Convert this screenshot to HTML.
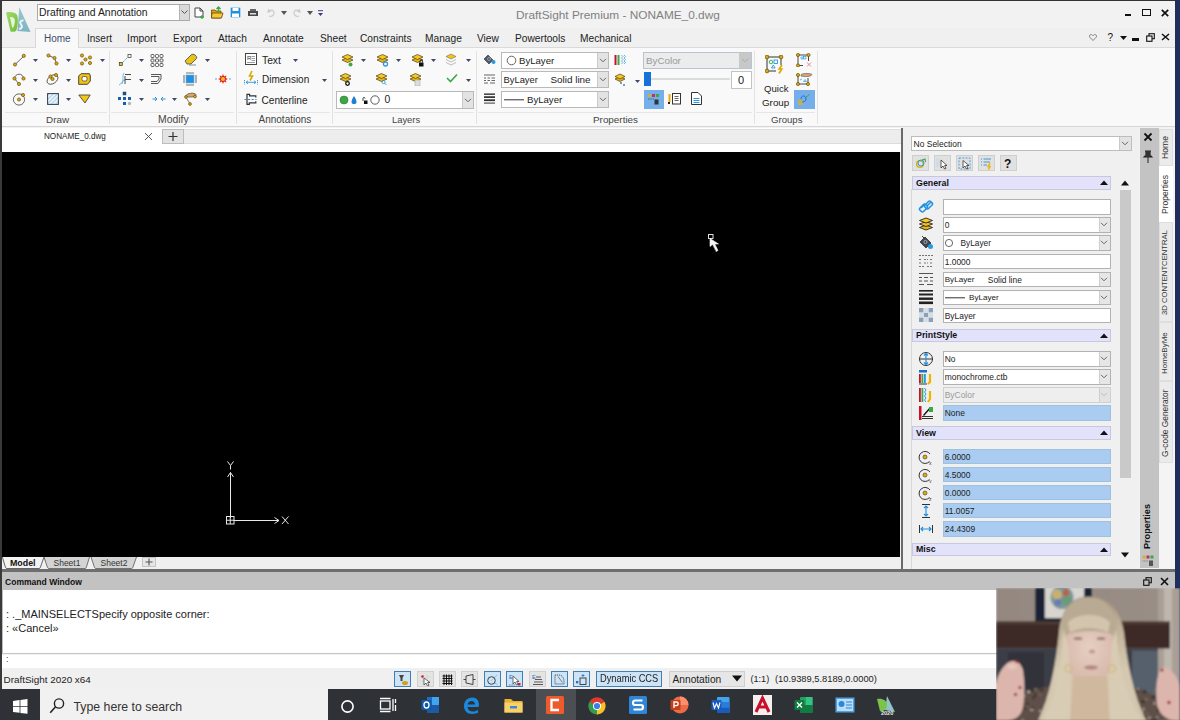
<!DOCTYPE html>
<html><head><meta charset="utf-8">
<style>
*{margin:0;padding:0;box-sizing:border-box}
html,body{width:1180px;height:720px;overflow:hidden;background:#f0f0f0;font-family:"Liberation Sans",sans-serif;font-size:12px;color:#222}
.a{position:absolute}
.t{position:absolute;white-space:nowrap;line-height:1}
</style></head><body>
<!-- window frame -->
<div class="a" style="left:0;top:0;width:1180px;height:720px;background:#f2f2f2"></div>
<div class="a" style="left:0;top:0;width:1180px;height:1px;background:#333"></div>
<div class="a" style="left:0;top:0;width:2px;height:690px;background:#3a3a3a"></div>
<div class="a" style="left:1175px;top:0;width:5px;height:720px;background:#1f2d5c"></div>

<!-- title bar -->
<div id="title" class="a" style="left:2px;top:1px;width:1173px;height:27px;background:#f2f2f2"></div>
<!-- tabs row -->
<div id="tabs" class="a" style="left:2px;top:28px;width:1173px;height:19px;background:#f0f0f0"></div>
<!-- ribbon -->
<div id="ribbon" class="a" style="left:2px;top:47px;width:1173px;height:80px;background:#f9f9f9;border-top:1px solid #dadada;border-bottom:1px solid #d6d6d6"></div>


<!-- TITLE BAR CONTENT -->
<svg class="a" style="left:0px;top:0px" width="36" height="36" viewBox="0 0 36 36">
  <defs><linearGradient id="lgD" x1="0" y1="0" x2="1" y2="1"><stop offset="0" stop-color="#a6d86a"/><stop offset="1" stop-color="#6fbf3a"/></linearGradient>
  <linearGradient id="lgT" x1="0" y1="0" x2="0" y2="1"><stop offset="0" stop-color="#9ccbc9"/><stop offset="1" stop-color="#7fb3c4"/></linearGradient></defs>
  <polygon points="19.3,7 30.5,32 17.5,31" fill="url(#lgT)"/>
  <path d="M6,12.5 C10,11.5 15,12 17,15 C18.5,18 18,27 16,31 C14,32 12,32 10.5,31.5 Z" fill="url(#lgD)"/>
  <path d="M10,17 C12.5,16.5 14.5,17.5 14.8,20 C15,23 14,26.5 13,28 C12.5,28 12.2,27.5 12,27 Z" fill="#e6f4da"/>
  <path d="M23.5,20.5 C20.5,20 19.5,22.5 21,24.5 C22.5,26 22.5,28.5 19,29" stroke="#eaf4f4" stroke-width="2" fill="none"/>
</svg>
<div class="a" style="left:37px;top:4px;width:153px;height:17px;background:#fff;border:1px solid #a9a9a9"></div>
<div class="a" style="left:179px;top:5px;width:10px;height:15px;background:#dadada;border-left:1px solid #b5b5b5"></div>
<svg class="a" style="left:180px;top:9px" width="9" height="6"><path d="M1.5,1.5 L4.5,4.5 L7.5,1.5" stroke="#555" fill="none" stroke-width="1"/></svg>
<div class="t" style="left:39px;top:8px;font-size:10.4px;color:#1a1a1a">Drafting and Annotation</div>
<!-- quick access -->
<svg class="a" style="left:194px;top:7px" width="11" height="12" viewBox="0 0 11 12"><path d="M1,1 H6 L9,4 V10 H1 Z M6,1 V4 H9" stroke="#444" fill="#fff" stroke-width="1"/><path d="M8,8 V12 M6,10 H10" stroke="#3aa845" stroke-width="1.3"/></svg>
<svg class="a" style="left:211px;top:6px" width="13" height="13" viewBox="0 0 13 13"><path d="M0.5,4 H4 L5,5 H10 V12 H0.5 Z" fill="#d9a514" stroke="#6a4a00" stroke-width="0.8"/><path d="M1,7 H12 L10.5,12 H0.5 Z" fill="#f3c93a" stroke="#6a4a00" stroke-width="0.8"/><path d="M7.5,1 V6 M5.5,3 L7.5,1 L9.5,3" stroke="#3aa845" stroke-width="1.3" fill="none"/></svg>
<svg class="a" style="left:230px;top:7px" width="11" height="11" viewBox="0 0 11 11"><rect x="0.7" y="0.7" width="9.6" height="9.6" fill="#1f8fe0"/><rect x="2.5" y="1" width="6" height="3" fill="#fff"/><rect x="2" y="6.5" width="7" height="3.5" fill="#fff"/></svg>
<svg class="a" style="left:247px;top:8px" width="12" height="9" viewBox="0 0 12 9"><path d="M3,1 H9 V3 H3 Z" fill="#666"/><path d="M1,3 H11 V8 H1 Z" fill="#4a4a4a"/><rect x="3" y="5" width="6" height="1.5" fill="#ddd"/></svg>
<svg class="a" style="left:267px;top:7px" width="8" height="11" viewBox="0 0 8 11"><path d="M2,2 L1,5 L4,4 M1.5,4.5 C4,2 7,3 7,6 C7,9 4,10 2,9" stroke="#c9c9c9" fill="none" stroke-width="1.2"/></svg>
<svg class="a" style="left:281px;top:11px" width="6" height="4"><polygon points="0,0 6,0 3,4" fill="#555"/></svg>
<svg class="a" style="left:293px;top:7px" width="8" height="11" viewBox="0 0 8 11"><path d="M6,2 L7,5 L4,4 M6.5,4.5 C4,2 1,3 1,6 C1,9 4,10 6,9" stroke="#c9c9c9" fill="none" stroke-width="1.2"/></svg>
<svg class="a" style="left:307px;top:11px" width="6" height="4"><polygon points="0,0 6,0 3,4" fill="#555"/></svg>
<svg class="a" style="left:318px;top:10px" width="5" height="7"><rect x="0" y="0" width="5" height="1.2" fill="#5a5a9a"/><polygon points="0,3 5,3 2.5,6" fill="#3a3a7a"/></svg>
<div class="t" style="left:516px;top:10px;font-size:11.84px;color:#808080">DraftSight Premium - NONAME_0.dwg</div>
<!-- window controls -->
<div class="a" style="left:1124.5px;top:13.5px;width:6px;height:2px;background:#111"></div>
<div class="a" style="left:1142px;top:8.5px;width:8.5px;height:7.5px;border:1.3px solid #111;border-top-width:1.8px"></div>
<svg class="a" style="left:1161px;top:8.5px" width="8" height="8"><path d="M0.8,0.8 L7.2,7.2 M7.2,0.8 L0.8,7.2" stroke="#111" stroke-width="1.7"/></svg>
<!-- tab row right controls -->
<svg class="a" style="left:1089px;top:34px" width="8" height="7" viewBox="0 0 8 7"><path d="M4,6.5 L0.8,3.2 C-0.2,1.8 1,0.3 2.3,0.6 C3.2,0.8 4,1.8 4,1.8 C4,1.8 4.8,0.8 5.7,0.6 C7,0.3 8.2,1.8 7.2,3.2 Z" fill="none" stroke="#777" stroke-width="0.9"/></svg>
<div class="t" style="left:1107.5px;top:33px;font-size:10px;color:#111">?</div>
<svg class="a" style="left:1120px;top:36px" width="7" height="4"><polygon points="0,0 7,0 3.5,4" fill="#111"/></svg>
<div class="a" style="left:1132px;top:38px;width:7px;height:2.5px;background:#111"></div>
<svg class="a" style="left:1146px;top:33px" width="9" height="9" viewBox="0 0 9 9"><rect x="3" y="0.7" width="5.3" height="5" fill="none" stroke="#111" stroke-width="1.1"/><rect x="0.7" y="3" width="5.3" height="5.3" fill="#f0f0f0" stroke="#111" stroke-width="1.1"/></svg>
<svg class="a" style="left:1161px;top:33px" width="9" height="8"><path d="M1,1 L8,7 M8,1 L1,7" stroke="#111" stroke-width="1.5"/></svg>
<!-- menu tabs -->
<div class="a" style="left:35px;top:28px;width:44px;height:20px;background:#f9f9f9;border:1px solid #d8d8d8;border-bottom:none"></div>
<div class="t" style="left:44px;top:34px;font-size:10px;color:#3e4c6e">Home</div>
<div class="t" style="left:87px;top:34px;font-size:10px;color:#222">Insert</div>
<div class="t" style="left:127px;top:34px;font-size:10.4px;color:#222">Import</div>
<div class="t" style="left:173px;top:34px;font-size:10px;color:#222">Export</div>
<div class="t" style="left:218px;top:34px;font-size:10.2px;color:#222">Attach</div>
<div class="t" style="left:263px;top:34px;font-size:10.2px;color:#222">Annotate</div>
<div class="t" style="left:320px;top:34px;font-size:10.2px;color:#222">Sheet</div>
<div class="t" style="left:360px;top:34px;font-size:10.2px;color:#222">Constraints</div>
<div class="t" style="left:425px;top:34px;font-size:10.2px;color:#222">Manage</div>
<div class="t" style="left:477px;top:34px;font-size:10.2px;color:#222">View</div>
<div class="t" style="left:515px;top:34px;font-size:10.2px;color:#222">Powertools</div>
<div class="t" style="left:580px;top:34px;font-size:10.2px;color:#222">Mechanical</div>

<!-- RIBBON START -->
<div class="a" style="left:109px;top:51px;width:1px;height:73px;background:#e2e2e2"></div>
<div class="a" style="left:236px;top:51px;width:1px;height:73px;background:#e2e2e2"></div>
<div class="a" style="left:332px;top:51px;width:1px;height:73px;background:#e2e2e2"></div>
<div class="a" style="left:476px;top:51px;width:1px;height:73px;background:#e2e2e2"></div>
<div class="a" style="left:754px;top:51px;width:1px;height:73px;background:#e2e2e2"></div>
<div class="a" style="left:817px;top:51px;width:1px;height:73px;background:#e2e2e2"></div>
<div class="a" style="left:5px;top:112px;width:102px;height:1px;background:#e6e6e6"></div>
<div class="a" style="left:111px;top:112px;width:123px;height:1px;background:#e6e6e6"></div>
<div class="a" style="left:238px;top:112px;width:92px;height:1px;background:#e6e6e6"></div>
<div class="a" style="left:334px;top:112px;width:140px;height:1px;background:#e6e6e6"></div>
<div class="a" style="left:478px;top:112px;width:274px;height:1px;background:#e6e6e6"></div>
<div class="a" style="left:756px;top:112px;width:59px;height:1px;background:#e6e6e6"></div>
<div class="t" style="left:46px;top:114.5px;font-size:9.9px;color:#444;">Draw</div>
<div class="t" style="left:158px;top:114.5px;font-size:10.4px;color:#444;">Modify</div>
<div class="t" style="left:258.5px;top:114.5px;font-size:10px;color:#444;">Annotations</div>
<div class="t" style="left:392px;top:114.5px;font-size:9.4px;color:#444;">Layers</div>
<div class="t" style="left:593px;top:114.5px;font-size:9.9px;color:#444;">Properties</div>
<div class="t" style="left:771px;top:114.5px;font-size:9.6px;color:#444;">Groups</div>
<svg class="a" style="left:12px;top:53px" width="14" height="14" viewBox="0 0 14 14"><line x1="3" y1="11.5" x2="12" y2="3" stroke="#555" stroke-width="0.9"/><circle cx="3" cy="11.5" r="1.6" fill="#d9a818" stroke="#6b5200" stroke-width="0.7"/><circle cx="11.8" cy="2.8" r="1.6" fill="#d9a818" stroke="#6b5200" stroke-width="0.7"/></svg>
<svg class="a" style="left:32.5px;top:59.0px" width="5" height="3" viewBox="0 0 5 3"><polygon points="0,0 5,0 2.5,3" fill="#3b4a6b"/></svg>
<svg class="a" style="left:46px;top:53px" width="14" height="14" viewBox="0 0 14 14"><path d="M2.5,2.5 L8.5,5 L10.5,10.5" stroke="#555" fill="none" stroke-width="0.9"/><circle cx="2.5" cy="2.5" r="1.6" fill="#d9a818" stroke="#6b5200" stroke-width="0.7"/><circle cx="8.5" cy="5" r="1.6" fill="#d9a818" stroke="#6b5200" stroke-width="0.7"/><circle cx="10.5" cy="10.5" r="1.6" fill="#d9a818" stroke="#6b5200" stroke-width="0.7"/></svg>
<svg class="a" style="left:66.0px;top:59.0px" width="5" height="3" viewBox="0 0 5 3"><polygon points="0,0 5,0 2.5,3" fill="#3b4a6b"/></svg>
<svg class="a" style="left:79px;top:53px" width="14" height="14" viewBox="0 0 14 14"><circle cx="3" cy="2.5" r="1.6" fill="#d9a818" stroke="#6b5200" stroke-width="0.7"/><circle cx="6.5" cy="6.5" r="1.6" fill="#d9a818" stroke="#6b5200" stroke-width="0.7"/><circle cx="3" cy="10.5" r="1.6" fill="#d9a818" stroke="#6b5200" stroke-width="0.7"/><circle cx="11" cy="4.5" r="1.6" fill="#d9a818" stroke="#6b5200" stroke-width="0.7"/><circle cx="11" cy="10" r="1.6" fill="#d9a818" stroke="#6b5200" stroke-width="0.7"/></svg>
<svg class="a" style="left:99.5px;top:59.0px" width="5" height="3" viewBox="0 0 5 3"><polygon points="0,0 5,0 2.5,3" fill="#3b4a6b"/></svg>
<svg class="a" style="left:12px;top:72px" width="14" height="14" viewBox="0 0 14 14"><path d="M2.5,6.5 C3,1 11,0.5 11.5,6.5 M2.5,6.5 L7,12" stroke="#555" fill="none" stroke-width="0.9"/><circle cx="2.5" cy="6.5" r="1.6" fill="#d9a818" stroke="#6b5200" stroke-width="0.7"/><circle cx="11.5" cy="6.5" r="1.6" fill="#d9a818" stroke="#6b5200" stroke-width="0.7"/><circle cx="7" cy="12" r="1.6" fill="#d9a818" stroke="#6b5200" stroke-width="0.7"/></svg>
<svg class="a" style="left:32.5px;top:78.5px" width="5" height="3" viewBox="0 0 5 3"><polygon points="0,0 5,0 2.5,3" fill="#3b4a6b"/></svg>
<svg class="a" style="left:46px;top:72px" width="14" height="14" viewBox="0 0 14 14"><ellipse cx="6.5" cy="7.5" rx="6" ry="4" transform="rotate(-35 6.5 7.5)" stroke="#555" fill="none" stroke-width="0.9"/><circle cx="4.5" cy="4.5" r="1.6" fill="#d9a818" stroke="#6b5200" stroke-width="0.7"/><circle cx="10" cy="3" r="1.6" fill="#d9a818" stroke="#6b5200" stroke-width="0.7"/><circle cx="6.5" cy="7" r="1.6" fill="#d9a818" stroke="#6b5200" stroke-width="0.7"/></svg>
<svg class="a" style="left:66.0px;top:78.5px" width="5" height="3" viewBox="0 0 5 3"><polygon points="0,0 5,0 2.5,3" fill="#3b4a6b"/></svg>
<svg class="a" style="left:78px;top:73px" width="13" height="12" viewBox="0 0 13 12"><path d="M3,0.7 H11.5 L12.3,3 V8 L9.5,11.3 H0.7 V3 Z" fill="#f1c40f" stroke="#333" stroke-width="0.9"/><rect x="4" y="3.5" width="5" height="4.5" rx="1.5" fill="#fff" stroke="#333" stroke-width="0.7"/></svg>
<svg class="a" style="left:12px;top:91px" width="16" height="16" viewBox="0 0 16 16"><circle cx="7" cy="8.5" r="5.6" stroke="#555" fill="none" stroke-width="0.9"/><circle cx="7" cy="8.5" r="1.6" fill="#d9a818" stroke="#6b5200" stroke-width="0.7"/><circle cx="11" cy="4" r="1.6" fill="#d9a818" stroke="#6b5200" stroke-width="0.7"/></svg>
<svg class="a" style="left:32.5px;top:98.0px" width="5" height="3" viewBox="0 0 5 3"><polygon points="0,0 5,0 2.5,3" fill="#3b4a6b"/></svg>
<svg class="a" style="left:47px;top:93px" width="12" height="12" viewBox="0 0 12 12"><defs><pattern id="h1" width="3" height="3" patternUnits="userSpaceOnUse" patternTransform="rotate(45)"><rect width="3" height="3" fill="#bfdcf0"/><rect width="1" height="3" fill="#fff"/></pattern></defs><rect x="0.6" y="0.6" width="10.8" height="10.8" fill="url(#h1)" stroke="#2f3b4c" stroke-width="1"/></svg>
<svg class="a" style="left:66.0px;top:98.0px" width="5" height="3" viewBox="0 0 5 3"><polygon points="0,0 5,0 2.5,3" fill="#3b4a6b"/></svg>
<svg class="a" style="left:78px;top:94px" width="13" height="10" viewBox="0 0 13 10"><polygon points="0.8,1 12.2,1 7,9" fill="#f5c518" stroke="#333" stroke-width="0.8"/></svg>
<svg class="a" style="left:118px;top:53px" width="14" height="14" viewBox="0 0 14 14"><line x1="3" y1="11" x2="10" y2="4" stroke="#2d8fd5" stroke-width="0.9" stroke-dasharray="1.5,1"/><rect x="1.3" y="9.5" width="3" height="3" fill="#e8c31a" stroke="#333" stroke-width="0.7"/><rect x="10" y="1.5" width="3" height="3" fill="#fff" stroke="#333" stroke-width="0.7"/></svg>
<svg class="a" style="left:138.5px;top:59.0px" width="5" height="3" viewBox="0 0 5 3"><polygon points="0,0 5,0 2.5,3" fill="#3b4a6b"/></svg>
<svg class="a" style="left:150px;top:53px" width="14" height="14" viewBox="0 0 14 14"><rect x="1.0" y="1.5" width="3" height="3" rx="0.8" fill="#fff" stroke="#4a4a4a" stroke-width="0.9"/><rect x="1.0" y="6.0" width="3" height="3" rx="0.8" fill="#fff" stroke="#4a4a4a" stroke-width="0.9"/><rect x="1.0" y="10.5" width="3" height="3" rx="0.8" fill="#fff" stroke="#4a4a4a" stroke-width="0.9"/><rect x="5.5" y="1.5" width="3" height="3" rx="0.8" fill="#fff" stroke="#4a4a4a" stroke-width="0.9"/><rect x="5.5" y="6.0" width="3" height="3" rx="0.8" fill="#fff" stroke="#4a4a4a" stroke-width="0.9"/><rect x="5.5" y="10.5" width="3" height="3" rx="0.8" fill="#fff" stroke="#4a4a4a" stroke-width="0.9"/><rect x="10.0" y="1.5" width="3" height="3" rx="0.8" fill="#fff" stroke="#4a4a4a" stroke-width="0.9"/><rect x="10.0" y="6.0" width="3" height="3" rx="0.8" fill="#fff" stroke="#4a4a4a" stroke-width="0.9"/><rect x="10.0" y="10.5" width="3" height="3" rx="0.8" fill="#fff" stroke="#4a4a4a" stroke-width="0.9"/></svg>
<svg class="a" style="left:184px;top:53px" width="14" height="13" viewBox="0 0 14 13"><path d="M1,8 L7,2 C8,1 10,1 11,2 L12,3 C13,4 13,5 12,6 L7,11 H3 Z" fill="#e8c31a" stroke="#444" stroke-width="0.8"/><line x1="5" y1="12" x2="12" y2="12" stroke="#777" stroke-width="0.8"/></svg>
<svg class="a" style="left:205.0px;top:59.0px" width="5" height="3" viewBox="0 0 5 3"><polygon points="0,0 5,0 2.5,3" fill="#3b4a6b"/></svg>
<svg class="a" style="left:118px;top:72px" width="14" height="14" viewBox="0 0 14 14"><path d="M6,1 C4,4 6,6 4,12 M1,13 C4,12 4,8 7,8" stroke="#5ab3e5" fill="none" stroke-width="0.9"/><path d="M7,12 V4 M7,2.5 H13 M7,7.5 H13" stroke="#333" fill="none" stroke-width="0.9"/></svg>
<svg class="a" style="left:138.5px;top:78.5px" width="5" height="3" viewBox="0 0 5 3"><polygon points="0,0 5,0 2.5,3" fill="#3b4a6b"/></svg>
<svg class="a" style="left:150px;top:73px" width="13" height="12" viewBox="0 0 13 12"><path d="M1,1.5 H11 V6 L8,10.5 H1 M1,3.5 H9 V6 L7,8.5 H1" stroke="#444" fill="none" stroke-width="0.9"/></svg>
<svg class="a" style="left:183px;top:72px" width="14" height="14" viewBox="0 0 14 14"><rect x="3" y="3" width="8" height="8" fill="#1e90e8" stroke="#8ab" stroke-width="0.6"/><path d="M3,1 H11 M3,13 H11 M1,3 V11 M13,3 V11" stroke="#777" stroke-width="1.1"/></svg>
<svg class="a" style="left:215px;top:72px" width="16" height="14" viewBox="0 0 16 14"><path d="M8,2 L9,4.5 L11.5,3.5 L10.5,6 L13,7 L10.5,8 L11.5,10.5 L9,9.5 L8,12 L7,9.5 L4.5,10.5 L5.5,8 L3,7 L5.5,6 L4.5,3.5 L7,4.5 Z" fill="#e8141c"/><circle cx="8" cy="7" r="2" fill="#f5c518"/><circle cx="1" cy="7" r="0.8" fill="#3a9ad9"/><circle cx="15" cy="7" r="0.8" fill="#3a9ad9"/></svg>
<svg class="a" style="left:117px;top:91px" width="16" height="16" viewBox="0 0 16 16"><rect x="6" y="1" width="3" height="3" fill="#1a5da8" stroke="#123" stroke-width="0.4"/><rect x="1" y="6" width="3" height="3" fill="#1a5da8"/><rect x="6" y="6" width="3" height="3" fill="#1a5da8"/><rect x="11" y="6" width="3" height="3" fill="#1a5da8"/><rect x="6" y="11" width="3" height="3" fill="#1a5da8"/><circle cx="12.5" cy="12.5" r="1.7" fill="#b5b5b5"/></svg>
<svg class="a" style="left:138.5px;top:98.0px" width="5" height="3" viewBox="0 0 5 3"><polygon points="0,0 5,0 2.5,3" fill="#3b4a6b"/></svg>
<svg class="a" style="left:152px;top:96px" width="14" height="6" viewBox="0 0 14 6"><path d="M0.5,3 H5 M3,1 L5,3 L3,5 M13.5,3 H9 M11,1 L9,3 L11,5" stroke="#2e8fd8" fill="none" stroke-width="1"/></svg>
<svg class="a" style="left:171.5px;top:98.0px" width="5" height="3" viewBox="0 0 5 3"><polygon points="0,0 5,0 2.5,3" fill="#3b4a6b"/></svg>
<svg class="a" style="left:184px;top:91px" width="14" height="15" viewBox="0 0 14 15"><path d="M2,5 C2,2 12,1 12,4 C12,6 4,7 2,5 Z" fill="#d8a46a" stroke="#555" stroke-width="0.8"/><path d="M2,5 C2,8 5,10 6,13" stroke="#555" fill="none" stroke-width="0.8"/><circle cx="2" cy="6" r="1.4" fill="#d9a818" stroke="#6b5200" stroke-width="0.7"/><circle cx="11" cy="5.5" r="1.4" fill="#d9a818" stroke="#6b5200" stroke-width="0.7"/><circle cx="6" cy="13" r="1.4" fill="#d9a818" stroke="#6b5200" stroke-width="0.7"/></svg>
<svg class="a" style="left:205.0px;top:98.0px" width="5" height="3" viewBox="0 0 5 3"><polygon points="0,0 5,0 2.5,3" fill="#3b4a6b"/></svg>
<svg class="a" style="left:245px;top:53px" width="12" height="12" viewBox="0 0 12 12"><rect x="0.5" y="0.5" width="11" height="11" fill="#fff" stroke="#444" stroke-width="1"/><text x="2" y="7" font-size="6" font-family="Liberation Sans" fill="#333">R</text><rect x="6.5" y="3" width="3.5" height="0.8" fill="#888"/><rect x="6.5" y="5" width="3.5" height="0.8" fill="#888"/><rect x="6.5" y="7" width="3.5" height="0.8" fill="#888"/><rect x="2" y="9" width="8" height="0.8" fill="#888"/></svg>
<div class="t" style="left:262px;top:55.5px;font-size:10.3px;color:#222;">Text</div>
<svg class="a" style="left:293.0px;top:59.0px" width="5" height="3" viewBox="0 0 5 3"><polygon points="0,0 5,0 2.5,3" fill="#3b4a6b"/></svg>
<svg class="a" style="left:243px;top:70px" width="16" height="16" viewBox="0 0 16 16"><path d="M9,1 L6.5,6 H9.5 L7,10.5" stroke="#d9a800" fill="none" stroke-width="1.6"/><path d="M1.5,10 V14.5 M14.5,10 V14.5" stroke="#2a9ae0" stroke-width="1" stroke-dasharray="1.2,0.8"/><path d="M3,12.3 H13 M5,10.8 L3,12.3 L5,13.8 M11,10.8 L13,12.3 L11,13.8" stroke="#2a9ae0" fill="none" stroke-width="0.9"/></svg>
<div class="t" style="left:262px;top:75px;font-size:10px;color:#222;">Dimension</div>
<svg class="a" style="left:322.0px;top:78.5px" width="5" height="3" viewBox="0 0 5 3"><polygon points="0,0 5,0 2.5,3" fill="#3b4a6b"/></svg>
<svg class="a" style="left:243px;top:92px" width="16" height="15" viewBox="243 92 16 15"><path d="M255.8,97.6 V95.8 H249.6 V94.4 H247 V104.4 H249.3 V102.9 H255.8 V101.3" stroke="#333" fill="none" stroke-width="1.2"/><path d="M244.5,99.5 H256.5" stroke="#3a7fc0" stroke-width="1" stroke-dasharray="2,1.6"/></svg>
<div class="t" style="left:261.5px;top:95.5px;font-size:10.1px;color:#222;">Centerline</div>
<svg class="a" style="left:341px;top:53px" width="14" height="14" viewBox="0 0 14 14"><path d="M1,7 L6.5,4.5 L12,7 L6.5,9.5 Z" fill="#e9b512" stroke="#4a3c08" stroke-width="0.7"/><path d="M1,4 L6.5,1.5 L12,4 L6.5,6.5 Z" fill="#f5c82a" stroke="#4a3c08" stroke-width="0.7"/><circle cx="9.5" cy="11.5" r="2" fill="#3aa845"/></svg>
<svg class="a" style="left:361.0px;top:59.0px" width="5" height="3" viewBox="0 0 5 3"><polygon points="0,0 5,0 2.5,3" fill="#3b4a6b"/></svg>
<svg class="a" style="left:376px;top:53px" width="14" height="14" viewBox="0 0 14 14"><path d="M1,7 L6.5,4.5 L12,7 L6.5,9.5 Z" fill="#e9b512" stroke="#4a3c08" stroke-width="0.7"/><path d="M1,4 L6.5,1.5 L12,4 L6.5,6.5 Z" fill="#f5c82a" stroke="#4a3c08" stroke-width="0.7"/><circle cx="9.5" cy="11" r="2" fill="#fff" stroke="#2a9ae0" stroke-width="1.3"/></svg>
<svg class="a" style="left:396.0px;top:59.0px" width="5" height="3" viewBox="0 0 5 3"><polygon points="0,0 5,0 2.5,3" fill="#3b4a6b"/></svg>
<svg class="a" style="left:411px;top:53px" width="14" height="14" viewBox="0 0 14 14"><path d="M1,7 L6.5,4.5 L12,7 L6.5,9.5 Z" fill="#e9b512" stroke="#4a3c08" stroke-width="0.7"/><path d="M1,4 L6.5,1.5 L12,4 L6.5,6.5 Z" fill="#f5c82a" stroke="#4a3c08" stroke-width="0.7"/><rect x="8" y="9.5" width="4.5" height="4" fill="#111"/><path d="M9,9.5 V8 C9,6.5 11.5,6.5 11.5,8 V9.5" stroke="#111" fill="none" stroke-width="0.8"/></svg>
<svg class="a" style="left:431.0px;top:59.0px" width="5" height="3" viewBox="0 0 5 3"><polygon points="0,0 5,0 2.5,3" fill="#3b4a6b"/></svg>
<svg class="a" style="left:445px;top:53px" width="14" height="14" viewBox="0 0 14 14"><path d="M1,3.5 L6,1 L11,3.5 L6,6 Z" fill="#f5c518" stroke="#555" stroke-width="0.5"/><path d="M1,6.5 L6,9 L11,6.5 M1,9.5 L6,12 L11,9.5" stroke="#aaa" fill="none" stroke-width="0.8"/></svg>
<svg class="a" style="left:465.5px;top:59.0px" width="5" height="3" viewBox="0 0 5 3"><polygon points="0,0 5,0 2.5,3" fill="#3b4a6b"/></svg>
<svg class="a" style="left:339px;top:72px" width="14" height="14" viewBox="0 0 14 14"><path d="M1,7 L6.5,4.5 L12,7 L6.5,9.5 Z" fill="#e9b512" stroke="#4a3c08" stroke-width="0.7"/><path d="M1,4 L6.5,1.5 L12,4 L6.5,6.5 Z" fill="#f5c82a" stroke="#4a3c08" stroke-width="0.7"/><circle cx="8.5" cy="11.5" r="1.8" fill="#fff" stroke="#111" stroke-width="1.3"/></svg>
<svg class="a" style="left:375px;top:72px" width="14" height="14" viewBox="0 0 14 14"><path d="M1,7 L6.5,4.5 L12,7 L6.5,9.5 Z" fill="#e9b512" stroke="#4a3c08" stroke-width="0.7"/><path d="M1,4 L6.5,1.5 L12,4 L6.5,6.5 Z" fill="#f5c82a" stroke="#4a3c08" stroke-width="0.7"/><circle cx="8.5" cy="10" r="1.6" fill="none" stroke="#2a9ae0" stroke-width="0.8"/><path d="M9.5,11 L11.5,13" stroke="#2a9ae0" stroke-width="0.9"/></svg>
<svg class="a" style="left:409px;top:72px" width="14" height="14" viewBox="0 0 14 14"><path d="M1,7 L6.5,4.5 L12,7 L6.5,9.5 Z" fill="#e9b512" stroke="#4a3c08" stroke-width="0.7"/><path d="M1,4 L6.5,1.5 L12,4 L6.5,6.5 Z" fill="#f5c82a" stroke="#4a3c08" stroke-width="0.7"/><rect x="6" y="8" width="5" height="6" fill="#ddd" stroke="#aaa" stroke-width="0.6"/></svg>
<svg class="a" style="left:446px;top:73px" width="12" height="10" viewBox="0 0 12 10"><path d="M1,5 L4.5,8.5 L11,1.5" stroke="#3aa845" fill="none" stroke-width="1.6"/></svg>
<svg class="a" style="left:465.5px;top:78.5px" width="5" height="3" viewBox="0 0 5 3"><polygon points="0,0 5,0 2.5,3" fill="#3b4a6b"/></svg>
<div class="a" style="left:336px;top:91px;width:138px;height:18px;background:#fff;border:1px solid #b9b9b9"></div>
<div class="a" style="left:462px;top:92px;width:11px;height:16px;background:#e3e3e3;border-left:1px solid #c9c9c9"></div>
<svg class="a" style="left:464px;top:98px" width="8" height="5" viewBox="0 0 8 5"><path d="M1,0.8 L4,3.8 L7,0.8" stroke="#666" fill="none" stroke-width="1"/></svg>
<svg class="a" style="left:338px;top:94px" width="56" height="12" viewBox="0 0 56 12"><circle cx="6" cy="6" r="4" fill="#3aa845" stroke="#2b7a33" stroke-width="0.6"/><path d="M16,2 C14,5 13.5,7 13.5,8 C13.5,9.5 14.5,10 16,10 C17.5,10 18.5,9.5 18.5,8 C18.5,7 18,5 16,2 Z" fill="#1c7ed6"/><path d="M25,7 V4.5 C25,3 27,3 27,4.5" stroke="#111" fill="none" stroke-width="0.8"/><rect x="26" y="6.5" width="3.5" height="3.5" fill="#111"/><circle cx="37" cy="6" r="4.2" fill="#fff" stroke="#333" stroke-width="0.8"/></svg>
<div class="t" style="left:384.5px;top:95px;font-size:10.3px;color:#222;">0</div>
<svg class="a" style="left:483px;top:54px" width="13" height="11" viewBox="0 0 13 11"><path d="M1,5 L5,1 L10,6 L6,10 Z" fill="#4a5566" stroke="#333" stroke-width="0.6"/><circle cx="6" cy="5" r="1.5" fill="none" stroke="#ccd" stroke-width="0.6"/><circle cx="10.5" cy="8" r="2" fill="#2a9ae0"/></svg>
<div class="a" style="left:501px;top:52px;width:108px;height:17px;background:#fff;border:1px solid #b9b9b9"></div>
<div class="a" style="left:597px;top:53px;width:11px;height:15px;background:#e3e3e3;border-left:1px solid #c9c9c9"></div>
<svg class="a" style="left:599px;top:58px" width="8" height="5" viewBox="0 0 8 5"><path d="M1,0.8 L4,3.8 L7,0.8" stroke="#666" fill="none" stroke-width="1"/></svg>
<svg class="a" style="left:506px;top:55px" width="11" height="11" viewBox="0 0 11 11"><circle cx="5.5" cy="5.5" r="4.3" fill="#fff" stroke="#555" stroke-width="0.9"/></svg>
<div class="t" style="left:519px;top:55.5px;font-size:9.6px;color:#222;">ByLayer</div>
<svg class="a" style="left:483px;top:74px" width="13" height="10" viewBox="0 0 13 10"><path d="M1,1 H12 M1,4 H3 M4.5,4 H7 M8.5,4 H12 M1,6.5 H3 M4.5,6.5 H7 M8.5,6.5 H12 M1,9 H5 M7,9 H12" stroke="#555" stroke-width="0.9"/></svg>
<div class="a" style="left:501px;top:71px;width:108px;height:17px;background:#fff;border:1px solid #b9b9b9"></div>
<div class="a" style="left:597px;top:72px;width:11px;height:15px;background:#e3e3e3;border-left:1px solid #c9c9c9"></div>
<svg class="a" style="left:599px;top:77px" width="8" height="5" viewBox="0 0 8 5"><path d="M1,0.8 L4,3.8 L7,0.8" stroke="#666" fill="none" stroke-width="1"/></svg>
<div class="t" style="left:503.5px;top:74.5px;font-size:9.4px;color:#222;">ByLayer</div>
<div class="t" style="left:550.5px;top:74.5px;font-size:9.9px;color:#222;">Solid line</div>
<svg class="a" style="left:484px;top:93px" width="11" height="11" viewBox="0 0 11 11"><rect x="0" y="0.5" width="11" height="1.3" fill="#222"/><rect x="0" y="3.3" width="11" height="1.6" fill="#222"/><rect x="0" y="6.3" width="11" height="1.8" fill="#333"/><rect x="0" y="9.3" width="11" height="1.7" fill="#888"/></svg>
<div class="a" style="left:501px;top:91px;width:108px;height:17px;background:#fff;border:1px solid #b9b9b9"></div>
<div class="a" style="left:597px;top:92px;width:11px;height:15px;background:#e3e3e3;border-left:1px solid #c9c9c9"></div>
<svg class="a" style="left:599px;top:97px" width="8" height="5" viewBox="0 0 8 5"><path d="M1,0.8 L4,3.8 L7,0.8" stroke="#666" fill="none" stroke-width="1"/></svg>
<svg class="a" style="left:504px;top:99px" width="20" height="2" viewBox="0 0 20 2"><rect x="0" y="0.3" width="20" height="1" fill="#333"/></svg>
<div class="t" style="left:527px;top:94.5px;font-size:9.6px;color:#222;">ByLayer</div>
<svg class="a" style="left:614px;top:54px" width="13" height="12" viewBox="0 0 13 12"><rect x="0.5" y="1" width="2" height="10" fill="#c8102e"/><rect x="3.5" y="1" width="2" height="10" fill="#3aa845"/><path d="M7.5,1 L9,2.5 L7.5,4 L9,5.5 L7.5,7 L9,8.5 L7.5,10 M10,1 L11.5,2.5 L10,4 L11.5,5.5 L10,7 L11.5,8.5 L10,10" stroke="#2a9ae0" fill="none" stroke-width="0.7"/></svg>
<div class="a" style="left:643px;top:52px;width:109px;height:17px;background:#ececec;border:1px solid #b8c4d4"></div>
<div class="a" style="left:739px;top:53px;width:12px;height:15px;background:#c8c8c8;border-left:1px solid #c9c9c9"></div>
<svg class="a" style="left:741px;top:58px" width="8" height="5" viewBox="0 0 8 5"><path d="M1,0.8 L4,3.8 L7,0.8" stroke="#aaa" fill="none" stroke-width="1"/></svg>
<div class="t" style="left:646px;top:55.5px;font-size:9.8px;color:#9a9a9a;">ByColor</div>
<svg class="a" style="left:614px;top:73px" width="14" height="14" viewBox="0 0 14 14"><path d="M1,6 L6,3.5 L11,6 L6,8.5 Z" fill="#e9b512" stroke="#4a3c08" stroke-width="0.7"/><path d="M1,3.5 L6,1 L11,3.5 L6,6 Z" fill="#f5c82a" stroke="#4a3c08" stroke-width="0.7"/><rect x="6" y="9" width="2" height="2" fill="#7a9bbf"/><rect x="9" y="11" width="2" height="2" fill="#7a9bbf"/></svg>
<svg class="a" style="left:635.0px;top:79.5px" width="5" height="3" viewBox="0 0 5 3"><polygon points="0,0 5,0 2.5,3" fill="#3b4a6b"/></svg>
<div class="a" style="left:650px;top:77.5px;width:80px;height:2.5px;background:#dcdcdc"></div>
<div class="a" style="left:643.5px;top:72px;width:7px;height:14px;background:#1672d8"></div>
<div class="a" style="left:731px;top:70.5px;width:21px;height:18px;background:#fff;border:1px solid #c3c3c3"></div>
<div class="t" style="left:738px;top:75px;font-size:11px;color:#222;">0</div>
<div class="a" style="left:643.5px;top:90px;width:20.5px;height:18.5px;background:#75aee8"></div>
<svg class="a" style="left:648px;top:94px" width="12" height="11" viewBox="0 0 12 11"><rect x="0" y="0" width="3" height="3" fill="#d4b030"/><rect x="4" y="0" width="3" height="3" fill="#c03060"/><rect x="8" y="0" width="3" height="3" fill="#3aa845"/><path d="M0,5 H6" stroke="#333" stroke-width="0.6" stroke-dasharray="1,0.6"/><rect x="6.5" y="5.5" width="4" height="5" fill="#333"/></svg>
<svg class="a" style="left:668px;top:93px" width="13" height="12" viewBox="0 0 13 12"><rect x="0.5" y="1" width="2" height="8" fill="#f5a800"/><rect x="0" y="9" width="2" height="2" fill="#222"/><rect x="4.5" y="0.5" width="8" height="10.5" fill="#fff" stroke="#333" stroke-width="1"/><rect x="6.5" y="3" width="4" height="1" fill="#666"/><rect x="6.5" y="5" width="4" height="1" fill="#666"/><rect x="6.5" y="7" width="4" height="1" fill="#666"/></svg>
<svg class="a" style="left:691px;top:92px" width="11" height="13" viewBox="0 0 11 13"><path d="M0.5,0.5 H7 L10.5,4 V12.5 H0.5 Z" fill="#fff" stroke="#333" stroke-width="1"/><rect x="2.5" y="6" width="6" height="1" fill="#2a9ae0"/><rect x="2.5" y="8" width="6" height="1" fill="#2a9ae0"/><rect x="2.5" y="10" width="6" height="1" fill="#2a9ae0"/></svg>
<svg class="a" style="left:765px;top:55px" width="20" height="20" viewBox="0 0 20 20"><path d="M2,2 H16 M2,2 V16 H11 M16,2 V10" stroke="#333" fill="none" stroke-width="1"/><circle cx="2" cy="2" r="1.9" fill="#d9a818" stroke="#6b5200" stroke-width="0.7"/><circle cx="16" cy="2" r="1.9" fill="#d9a818" stroke="#6b5200" stroke-width="0.7"/><circle cx="2" cy="16" r="1.9" fill="#d9a818" stroke="#6b5200" stroke-width="0.7"/><circle cx="6" cy="7" r="1.8" fill="none" stroke="#3aa845" stroke-width="0.9"/><rect x="9" y="5" width="3.5" height="3.5" fill="none" stroke="#2a9ae0" stroke-width="0.9"/><path d="M6.5,13 L8.3,10 L10.1,13 Z" fill="none" stroke="#2a9ae0" stroke-width="0.9"/><path d="M17,10 L14.2,14 H16.8 L14,18.5" stroke="#e0a800" fill="none" stroke-width="1.7"/></svg>
<div class="t" style="left:764px;top:84px;font-size:9.6px;color:#222;">Quick</div>
<div class="t" style="left:762px;top:97.5px;font-size:9.8px;color:#222;">Group</div>
<svg class="a" style="left:796px;top:53px" width="16" height="14" viewBox="0 0 16 14"><path d="M2,2 H12.5 V8 M2,2 V12.5 H7" stroke="#333" fill="none" stroke-width="0.9"/><circle cx="2" cy="2" r="1.6" fill="#d9a818" stroke="#6b5200" stroke-width="0.7"/><circle cx="12.5" cy="2" r="1.6" fill="#d9a818" stroke="#6b5200" stroke-width="0.7"/><circle cx="2" cy="12.5" r="1.6" fill="#d9a818" stroke="#6b5200" stroke-width="0.7"/><circle cx="6" cy="5" r="1.2" fill="none" stroke="#2a9ae0" stroke-width="0.7"/><rect x="7.5" y="3.5" width="2.4" height="2.4" fill="none" stroke="#2a9ae0" stroke-width="0.7"/><path d="M11,9.5 L15,13.5 M15,9.5 L11,13.5" stroke="#e87a90" stroke-width="0.9"/></svg>
<svg class="a" style="left:796px;top:72px" width="17" height="14" viewBox="0 0 17 14"><path d="M2,3 V12 H12 V6" stroke="#333" fill="none" stroke-width="0.9"/><circle cx="2" cy="3" r="1.6" fill="#d9a818" stroke="#6b5200" stroke-width="0.7"/><circle cx="2" cy="12" r="1.6" fill="#d9a818" stroke="#6b5200" stroke-width="0.7"/><circle cx="12" cy="12" r="1.6" fill="#d9a818" stroke="#6b5200" stroke-width="0.7"/><path d="M5,3 C5,1 15,1 16,2.5 C15,5 8,5 5,4 Z" fill="#d8a46a" stroke="#555" stroke-width="0.6"/><path d="M4,8 L6,7 M7.5,9.5 L9,7.5 L10.5,9.5 Z" stroke="#2a9ae0" fill="none" stroke-width="0.7"/></svg>
<div class="a" style="left:794px;top:90px;width:20.5px;height:18.5px;background:#75aee8"></div>
<svg class="a" style="left:797px;top:93px" width="14" height="13" viewBox="0 0 14 13"><rect x="1" y="7" width="5" height="5" fill="#d4b030" opacity="0.8"/><path d="M4,6 C4,2 9,2 9,6 C9,9 5,9 5,9" stroke="#1e6fc8" fill="none" stroke-width="1"/><path d="M9,4 C11,3 12,2 12,1" stroke="#3aa845" fill="none" stroke-width="1"/></svg>
<!-- RIBBON END -->
<!-- REST START -->
<div class="a" style="left:2px;top:128px;width:900px;height:24px;background:#fff"></div>
<div class="a" style="left:162px;top:129px;width:740px;height:15px;background:#ededed;border-top:1px solid #dedede;border-bottom:1px solid #dcdcdc"></div>
<div class="a" style="left:162px;top:129px;width:22px;height:15px;background:#e3e3e3;border:1px solid #bdbdbd"></div>
<svg class="a" style="left:167px;top:131px" width="12" height="11" viewBox="0 0 12 11"><path d="M6,1 V10 M1.5,5.5 H10.5" stroke="#333" stroke-width="1.2"/></svg>
<div class="t" style="left:44px;top:133px;font-size:8.14px;color:#222;">NONAME_0.dwg</div>
<svg class="a" style="left:144px;top:132px" width="9" height="9" viewBox="0 0 9 9"><path d="M1,1 L8,8 M8,1 L1,8" stroke="#444" stroke-width="0.9"/></svg>
<div class="a" style="left:2px;top:152px;width:898px;height:405px;background:#000"></div>
<svg class="a" style="left:222px;top:458px" width="72" height="70" viewBox="0 0 72 70"><g stroke="#e8e8e8" fill="none" stroke-width="1"><path d="M8.5,60 V14.5 M5.5,19 L8.5,14.5 L11.5,19"/><path d="M12,62.5 H57 M52.5,59.5 L57,62.5 L52.5,65.5"/><rect x="4.5" y="58.5" width="7.5" height="7.5"/><path d="M8.25,58.5 V66 M4.5,62.25 H12"/><path d="M5.5,3.5 L8.5,7.5 L11.5,3.5 M8.5,7.5 V11.5"/><path d="M60,58.5 L66.5,66 M66.5,58.5 L60,66"/></g></svg>
<svg class="a" style="left:700px;top:228px" width="25" height="28" viewBox="700 228 25 28"><rect x="708.5" y="234.5" width="4.5" height="4" fill="none" stroke="#ddd" stroke-width="1"/><path d="M710,238.5 V246.5 L712.5,244.5 L716,251.5 L718,250.5 L714.8,244 L718.5,244 Z" fill="#f4f4f4" stroke="#f4f4f4" stroke-width="0.6"/><path d="M712.3,244.8 L715.6,251" stroke="#222" stroke-width="0.6"/></svg>
<div class="a" style="left:2px;top:557px;width:898px;height:12px;background:#f0f0f0"></div>
<svg class="a" style="left:0px;top:557px" width="142" height="13" viewBox="0 557 142 13"><path d="M44,557 L47.5,567.5 Q48,568.5 49,568.5 H85 Q86,568.5 86.3,567.5 L89.5,557" fill="#d4d4d4" stroke="#666" stroke-width="0.9"/><path d="M91,557 L94.5,567.5 Q95,568.5 96,568.5 H131.5 Q132.5,568.5 132.8,567.5 L136.5,557" fill="#d4d4d4" stroke="#666" stroke-width="0.9"/><path d="M2.3,557 L5.5,567.5 Q6,568.5 7,568.5 H39 Q40,568.5 40.3,567.5 L44,557" fill="#f3f3f3" stroke="#555" stroke-width="0.9"/></svg>
<div class="t" style="left:10px;top:559px;font-size:8.86px;color:#111;font-weight:bold">Model</div>
<div class="t" style="left:53.5px;top:559px;font-size:8.5px;color:#333;">Sheet1</div>
<div class="t" style="left:100.5px;top:559px;font-size:8.5px;color:#333;">Sheet2</div>
<div class="a" style="left:142px;top:557px;width:14px;height:10px;background:#e6e6e6;border:1px solid #c4c4c4"></div>
<svg class="a" style="left:143px;top:557px" width="12" height="10" viewBox="0 0 12 10"><path d="M6,1.5 V8.5 M2.5,5 H9.5" stroke="#555" stroke-width="1.1"/></svg>
<div class="a" style="left:901px;top:128px;width:2px;height:441px;background:#6a6a6a"></div>
<div class="a" style="left:903px;top:128px;width:236px;height:441px;background:#f0f0f0"></div>
<div class="a" style="left:911px;top:136px;width:221px;height:15px;background:#fff;border:1px solid #bdbdbd"></div>
<div class="a" style="left:1119px;top:137px;width:12px;height:13px;background:#e3e3e3;border-left:1px solid #c9c9c9"></div>
<svg class="a" style="left:1121px;top:141px" width="8" height="5" viewBox="0 0 8 5"><path d="M1,0.8 L4,3.8 L7,0.8" stroke="#666" fill="none" stroke-width="1"/></svg>
<div class="t" style="left:913.5px;top:139.5px;font-size:8.5px;color:#222;">No Selection</div>
<div class="a" style="left:912px;top:155px;width:17px;height:16px;background:#e1e1e1;border:1px solid #cfcfcf"></div>
<div class="a" style="left:934px;top:155px;width:17px;height:16px;background:#e1e1e1;border:1px solid #cfcfcf"></div>
<div class="a" style="left:956px;top:155px;width:17px;height:16px;background:#e1e1e1;border:1px solid #cfcfcf"></div>
<div class="a" style="left:978px;top:155px;width:17px;height:16px;background:#e1e1e1;border:1px solid #cfcfcf"></div>
<div class="a" style="left:1000px;top:155px;width:17px;height:16px;background:#e1e1e1;border:1px solid #cfcfcf"></div>
<svg class="a" style="left:914px;top:157px" width="13" height="13" viewBox="0 0 13 13"><circle cx="6" cy="7" r="3.3" fill="none" stroke="#d6b020" stroke-width="1.5"/><circle cx="7" cy="6" r="3" fill="none" stroke="#2a9ae0" stroke-width="1"/><path d="M8,3 L11,2 L11.5,5" stroke="#3aa845" fill="none" stroke-width="1.1"/></svg>
<svg class="a" style="left:936px;top:157px" width="13" height="13" viewBox="0 0 13 13"><path d="M1,1 V10 M3,1 V10" stroke="#c5d5e8" stroke-width="1"/><path d="M5,3 V11 L7,9 L8.5,12 L10,11.3 L8.6,8.5 L11,8.5 Z" fill="#fff" stroke="#333" stroke-width="0.8"/></svg>
<svg class="a" style="left:958px;top:157px" width="13" height="13" viewBox="0 0 13 13"><rect x="1" y="1" width="11" height="11" fill="none" stroke="#3a9ad9" stroke-width="0.9" stroke-dasharray="2,1.3"/><path d="M5,3.5 V11 L7,9 L8.5,12 L10,11.3 L8.6,8.5 L11,8.5 Z" fill="#fff" stroke="#333" stroke-width="0.8"/></svg>
<svg class="a" style="left:980px;top:157px" width="13" height="13" viewBox="0 0 13 13"><path d="M1,2 H2 M3.5,2 H11 M1,5 H2 M3.5,5 H10 M1,8 H2 M3.5,8 H7" stroke="#3a9ad9" stroke-width="1"/><path d="M10,6 L8,9.5 H10 L8.5,12.5" stroke="#f0b400" fill="none" stroke-width="1.5"/></svg>
<div class="t" style="left:1004px;top:157.5px;font-size:12px;color:#111;font-weight:bold">?</div>
<div class="a" style="left:911px;top:189px;width:1px;height:380px;background:#d8d8d8"></div>
<div class="a" style="left:911.5px;top:176px;width:199px;height:13.5px;background:#e2e2fa;border:1px solid #c7c7dd"></div>
<div class="t" style="left:916px;top:178.8px;font-size:8.86px;color:#111;font-weight:bold">General</div>
<svg class="a" style="left:1100px;top:180px" width="8" height="5" viewBox="0 0 8 5"><polygon points="0,5 4,0.5 8,5" fill="#111"/></svg>
<div class="a" style="left:911.5px;top:328.5px;width:199px;height:13.5px;background:#e2e2fa;border:1px solid #c7c7dd"></div>
<div class="t" style="left:916px;top:331.3px;font-size:8.86px;color:#111;font-weight:bold">PrintStyle</div>
<svg class="a" style="left:1100px;top:332.5px" width="8" height="5" viewBox="0 0 8 5"><polygon points="0,5 4,0.5 8,5" fill="#111"/></svg>
<div class="a" style="left:911.5px;top:426px;width:199px;height:13.5px;background:#e2e2fa;border:1px solid #c7c7dd"></div>
<div class="t" style="left:916px;top:428.8px;font-size:8.86px;color:#111;font-weight:bold">View</div>
<svg class="a" style="left:1100px;top:430px" width="8" height="5" viewBox="0 0 8 5"><polygon points="0,5 4,0.5 8,5" fill="#111"/></svg>
<div class="a" style="left:911.5px;top:542.5px;width:199px;height:13.5px;background:#e2e2fa;border:1px solid #c7c7dd"></div>
<div class="t" style="left:916px;top:545.3px;font-size:8.86px;color:#111;font-weight:bold">Misc</div>
<svg class="a" style="left:1100px;top:546.5px" width="8" height="5" viewBox="0 0 8 5"><polygon points="0,5 4,0.5 8,5" fill="#111"/></svg>
<div class="a" style="left:942.5px;top:199px;width:168px;height:15.5px;background:#fff;border:1px solid #b2b2b2"></div>
<div class="a" style="left:942.5px;top:217.3px;width:168px;height:15.5px;background:#fff;border:1px solid #b2b2b2"></div>
<div class="a" style="left:1098.5px;top:218.3px;width:11px;height:13.5px;background:#e6e6e6;border-left:1px solid #cfcfcf"></div>
<svg class="a" style="left:1100px;top:222.3px" width="8" height="5" viewBox="0 0 8 5"><path d="M1,0.8 L4,3.8 L7,0.8" stroke="#666" fill="none" stroke-width="1"/></svg>
<div class="t" style="left:944.7px;top:221.3px;font-size:8.45px;color:#222;">0</div>
<div class="a" style="left:942.5px;top:235.3px;width:168px;height:15.5px;background:#fff;border:1px solid #b2b2b2"></div>
<div class="a" style="left:1098.5px;top:236.3px;width:11px;height:13.5px;background:#e6e6e6;border-left:1px solid #cfcfcf"></div>
<svg class="a" style="left:1100px;top:240.3px" width="8" height="5" viewBox="0 0 8 5"><path d="M1,0.8 L4,3.8 L7,0.8" stroke="#666" fill="none" stroke-width="1"/></svg>
<svg class="a" style="left:944px;top:238.3px" width="10" height="10" viewBox="0 0 10 10"><circle cx="5" cy="5" r="3.6" fill="#fff" stroke="#444" stroke-width="0.8"/></svg>
<div class="t" style="left:960.5px;top:239.3px;font-size:8.3px;color:#222;">ByLayer</div>
<div class="a" style="left:942.5px;top:253.5px;width:168px;height:15.5px;background:#fff;border:1px solid #b2b2b2"></div>
<div class="t" style="left:944.7px;top:257.5px;font-size:8.45px;color:#222;">1.0000</div>
<div class="a" style="left:942.5px;top:271.7px;width:168px;height:15.5px;background:#fff;border:1px solid #b2b2b2"></div>
<div class="a" style="left:1098.5px;top:272.7px;width:11px;height:13.5px;background:#e6e6e6;border-left:1px solid #cfcfcf"></div>
<svg class="a" style="left:1100px;top:276.7px" width="8" height="5" viewBox="0 0 8 5"><path d="M1,0.8 L4,3.8 L7,0.8" stroke="#666" fill="none" stroke-width="1"/></svg>
<div class="t" style="left:944.7px;top:275.7px;font-size:8.1px;color:#222;">ByLayer</div>
<div class="t" style="left:987.8px;top:275.7px;font-size:8.4px;color:#222;">Solid line</div>
<div class="a" style="left:942.5px;top:289.7px;width:168px;height:15.5px;background:#fff;border:1px solid #b2b2b2"></div>
<div class="a" style="left:1098.5px;top:290.7px;width:11px;height:13.5px;background:#e6e6e6;border-left:1px solid #cfcfcf"></div>
<svg class="a" style="left:1100px;top:294.7px" width="8" height="5" viewBox="0 0 8 5"><path d="M1,0.8 L4,3.8 L7,0.8" stroke="#666" fill="none" stroke-width="1"/></svg>
<svg class="a" style="left:945px;top:296.7px" width="20" height="2" viewBox="0 0 20 2"><rect y="0.3" width="20" height="1" fill="#333"/></svg>
<div class="t" style="left:969px;top:293.7px;font-size:8.1px;color:#222;">ByLayer</div>
<div class="a" style="left:942.5px;top:307.5px;width:168px;height:15.5px;background:#fff;border:1px solid #b2b2b2"></div>
<div class="t" style="left:944.7px;top:311.5px;font-size:8.45px;color:#222;">ByLayer</div>
<div class="a" style="left:942.5px;top:351.4px;width:168px;height:15.5px;background:#fff;border:1px solid #b2b2b2"></div>
<div class="a" style="left:1098.5px;top:352.4px;width:11px;height:13.5px;background:#e6e6e6;border-left:1px solid #cfcfcf"></div>
<svg class="a" style="left:1100px;top:356.4px" width="8" height="5" viewBox="0 0 8 5"><path d="M1,0.8 L4,3.8 L7,0.8" stroke="#666" fill="none" stroke-width="1"/></svg>
<div class="t" style="left:944.7px;top:355.4px;font-size:8.45px;color:#222;">No</div>
<div class="a" style="left:942.5px;top:369.3px;width:168px;height:15.5px;background:#fff;border:1px solid #b2b2b2"></div>
<div class="a" style="left:1098.5px;top:370.3px;width:11px;height:13.5px;background:#e6e6e6;border-left:1px solid #cfcfcf"></div>
<svg class="a" style="left:1100px;top:374.3px" width="8" height="5" viewBox="0 0 8 5"><path d="M1,0.8 L4,3.8 L7,0.8" stroke="#666" fill="none" stroke-width="1"/></svg>
<div class="t" style="left:944.7px;top:373.3px;font-size:8.45px;color:#222;">monochrome.ctb</div>
<div class="a" style="left:942.5px;top:387.4px;width:168px;height:15.5px;background:#eeeeee;border:1px solid #d0d0d0"></div>
<div class="a" style="left:1098.5px;top:388.4px;width:11px;height:13.5px;background:#e3e3e3;border-left:1px solid #cfcfcf"></div>
<svg class="a" style="left:1100px;top:392.4px" width="8" height="5" viewBox="0 0 8 5"><path d="M1,0.8 L4,3.8 L7,0.8" stroke="#bbb" fill="none" stroke-width="1"/></svg>
<div class="t" style="left:944.7px;top:391.4px;font-size:8.45px;color:#9a9a9a;">ByColor</div>
<div class="a" style="left:942.5px;top:405.2px;width:168px;height:15.5px;background:#a9ccf0;border:1px solid #a0c0e0"></div>
<div class="t" style="left:944.7px;top:409.2px;font-size:8.45px;color:#222;">None</div>
<div class="a" style="left:942.5px;top:448.7px;width:168px;height:15.5px;background:#a9ccf0;border:1px solid #a0c0e0"></div>
<div class="t" style="left:944.7px;top:452.7px;font-size:8.45px;color:#222;">6.0000</div>
<div class="a" style="left:942.5px;top:466.7px;width:168px;height:15.5px;background:#a9ccf0;border:1px solid #a0c0e0"></div>
<div class="t" style="left:944.7px;top:470.7px;font-size:8.45px;color:#222;">4.5000</div>
<div class="a" style="left:942.5px;top:484.6px;width:168px;height:15.5px;background:#a9ccf0;border:1px solid #a0c0e0"></div>
<div class="t" style="left:944.7px;top:488.6px;font-size:8.45px;color:#222;">0.0000</div>
<div class="a" style="left:942.5px;top:502.8px;width:168px;height:15.5px;background:#a9ccf0;border:1px solid #a0c0e0"></div>
<div class="t" style="left:944.7px;top:506.8px;font-size:8.45px;color:#222;">11.0057</div>
<div class="a" style="left:942.5px;top:521px;width:168px;height:15.5px;background:#a9ccf0;border:1px solid #a0c0e0"></div>
<div class="t" style="left:944.7px;top:525px;font-size:8.45px;color:#222;">24.4309</div>
<svg class="a" style="left:918px;top:199px" width="16" height="16" viewBox="0 0 16 16"><path d="M3,9 L7,5 M9,7 L13,3" stroke="#1e90e0" stroke-width="1.5"/><rect x="3" y="5" width="5" height="8" rx="1.5" transform="rotate(45 5.5 9)" fill="none" stroke="#1e90e0" stroke-width="1.5"/><rect x="8" y="2" width="5" height="8" rx="1.5" transform="rotate(45 10.5 6)" fill="none" stroke="#1e90e0" stroke-width="1.5"/></svg>
<svg class="a" style="left:918px;top:217px" width="16" height="16" viewBox="0 0 16 16"><path d="M1.5,10.5 L8,8 L14.5,10.5 L8,13 Z" fill="#e9b512" stroke="#222" stroke-width="0.9"/><path d="M1.5,7 L8,4.5 L14.5,7 L8,9.5 Z" fill="#f0c020" stroke="#222" stroke-width="0.9"/><path d="M1.5,3.5 L8,1 L14.5,3.5 L8,6 Z" fill="#f5c82a" stroke="#222" stroke-width="0.9"/></svg>
<svg class="a" style="left:918px;top:235px" width="16" height="16" viewBox="0 0 16 16"><path d="M2,7 L7,2 L13,8 L8,13 Z" fill="#3c4654" stroke="#222" stroke-width="0.7"/><circle cx="7.5" cy="7" r="1.6" fill="none" stroke="#ccc" stroke-width="0.7"/><circle cx="12.5" cy="11.5" r="2.5" fill="#2a9ae0"/><path d="M4,1 L6,3" stroke="#222" stroke-width="0.9"/></svg>
<svg class="a" style="left:918px;top:254px" width="16" height="14" viewBox="0 0 16 14"><path d="M1,1.5 H15 M1,5.5 H4 M6,5.5 H10 M12,5.5 H15 M1,9 H4 M6,9 H10 M12,9 H15 M1,12.5 H6 M9,12.5 H15" stroke="#666" stroke-width="0.9" stroke-dasharray="2,1"/></svg>
<svg class="a" style="left:918px;top:272px" width="16" height="15" viewBox="0 0 16 15"><path d="M1,1.5 H15 M1,5.5 H4 M6,5.5 H10 M12,5.5 H15 M1,9 H4 M6,9 H10 M12,9 H15 M1,12.5 H6 M9,12.5 H15" stroke="#555" stroke-width="1"/></svg>
<svg class="a" style="left:918px;top:289px" width="16" height="16" viewBox="0 0 16 16"><rect x="1" y="1" width="14" height="1.6" fill="#222"/><rect x="1" y="4.5" width="14" height="2" fill="#222"/><rect x="1" y="8.5" width="14" height="2.4" fill="#222"/><rect x="1" y="12.5" width="14" height="2.6" fill="#222"/></svg>
<svg class="a" style="left:918px;top:307px" width="16" height="16" viewBox="0 0 16 16"><rect x="1" y="1" width="4.5" height="4.5" fill="#8aa0b8"/><rect x="10.5" y="1" width="4.5" height="4.5" fill="#8aa0b8"/><rect x="5.75" y="5.75" width="4.5" height="4.5" fill="#8aa0b8"/><rect x="1" y="10.5" width="4.5" height="4.5" fill="#8aa0b8"/><rect x="10.5" y="10.5" width="4.5" height="4.5" fill="#8aa0b8"/><rect x="5.75" y="1" width="4.5" height="4.5" fill="#d6dde6"/><rect x="1" y="5.75" width="4.5" height="4.5" fill="#d6dde6"/><rect x="10.5" y="5.75" width="4.5" height="4.5" fill="#d6dde6"/><rect x="5.75" y="10.5" width="4.5" height="4.5" fill="#d6dde6"/></svg>
<svg class="a" style="left:918px;top:351px" width="16" height="16" viewBox="0 0 16 16"><circle cx="8" cy="8" r="6.5" fill="none" stroke="#333" stroke-width="1"/><path d="M1,8 H15" stroke="#333" stroke-width="1"/><path d="M8,2.5 V13.5 M6,4.5 L8,2.5 L10,4.5 M6,11.5 L8,13.5 L10,11.5" stroke="#1e90e0" fill="none" stroke-width="1.2"/></svg>
<svg class="a" style="left:918px;top:369px" width="16" height="16" viewBox="0 0 16 16"><rect x="1" y="1" width="8" height="2.5" fill="#1e6fc8"/><rect x="1" y="5" width="1.8" height="9" fill="#c8102e"/><rect x="3.5" y="5" width="1.8" height="9" fill="#3aa845"/><rect x="6" y="5" width="1.8" height="9" fill="#2a9ae0"/><path d="M12,5 V13 L10,15" stroke="#f0b400" stroke-width="2.2" fill="none"/><rect x="1" y="14.5" width="8" height="1" fill="#333"/></svg>
<svg class="a" style="left:918px;top:387px" width="16" height="16" viewBox="0 0 16 16"><rect x="1" y="1" width="1.8" height="14" fill="#c8102e"/><rect x="3.5" y="1" width="1.8" height="14" fill="#3aa845"/><path d="M6.5,1 L8,3 L6.5,5 L8,7 L6.5,9 L8,11 L6.5,13 L8,15" stroke="#2a9ae0" fill="none" stroke-width="1"/><path d="M12,4 V12 L10,15" stroke="#f0b400" stroke-width="2.2" fill="none"/></svg>
<svg class="a" style="left:918px;top:405px" width="16" height="16" viewBox="0 0 16 16"><rect x="1" y="1" width="2.5" height="14" fill="#c8102e"/><path d="M5,10 L12,2 L13,3 L6,11 Z" fill="#111"/><rect x="11" y="2" width="4" height="5" fill="#3aa845"/><path d="M4,11.5 H15 M4,13.5 H15" stroke="#333" stroke-width="1"/></svg>
<svg class="a" style="left:917px;top:448.7px" width="17" height="16" viewBox="0 0 17 16"><path d="M12.5,12.5 A6,6 0 1 1 13,5" fill="none" stroke="#333" stroke-width="1"/><circle cx="8" cy="8" r="2" fill="#e0b000" stroke="#333" stroke-width="0.6"/><text x="12" y="15.5" font-size="5" font-family="Liberation Sans" fill="#333">x</text></svg>
<svg class="a" style="left:917px;top:466.7px" width="17" height="16" viewBox="0 0 17 16"><path d="M12.5,12.5 A6,6 0 1 1 13,5" fill="none" stroke="#333" stroke-width="1"/><circle cx="8" cy="8" r="2" fill="#e0b000" stroke="#333" stroke-width="0.6"/><text x="12" y="15.5" font-size="5" font-family="Liberation Sans" fill="#333">y</text></svg>
<svg class="a" style="left:917px;top:484.6px" width="17" height="16" viewBox="0 0 17 16"><path d="M12.5,12.5 A6,6 0 1 1 13,5" fill="none" stroke="#333" stroke-width="1"/><circle cx="8" cy="8" r="2" fill="#e0b000" stroke="#333" stroke-width="0.6"/><text x="12" y="15.5" font-size="5" font-family="Liberation Sans" fill="#333">z</text></svg>
<svg class="a" style="left:918px;top:503px" width="16" height="16" viewBox="0 0 16 16"><path d="M4,1.5 H12 M4,14.5 H12" stroke="#333" stroke-width="1.2"/><path d="M8,3 V13 M6,5 L8,3 L10,5 M6,11 L8,13 L10,11" stroke="#1e90e0" fill="none" stroke-width="1.1"/></svg>
<svg class="a" style="left:918px;top:521px" width="16" height="16" viewBox="0 0 16 16"><path d="M1.5,4 V12 M14.5,4 V12" stroke="#333" stroke-width="1"/><path d="M3,8 H13 M5,6 L3,8 L5,10 M11,6 L13,8 L11,10" stroke="#1e90e0" fill="none" stroke-width="1.1"/></svg>
<svg class="a" style="left:1121px;top:180px" width="8" height="6" viewBox="0 0 8 6"><polygon points="0,5.5 4,0.5 8,5.5" fill="#111"/></svg>
<div class="a" style="left:1119.5px;top:190px;width:11px;height:288px;background:#c9c9c9"></div>
<svg class="a" style="left:1121px;top:552px" width="8" height="6" viewBox="0 0 8 6"><polygon points="0,0.5 4,5.5 8,0.5" fill="#111"/></svg>
<div class="a" style="left:1139.5px;top:128px;width:19px;height:440px;background:#c3c3c3"></div>
<svg class="a" style="left:1143px;top:132px" width="10" height="10" viewBox="0 0 10 10"><path d="M1.5,1.5 L8.5,8.5 M8.5,1.5 L1.5,8.5" stroke="#111" stroke-width="1.8"/></svg>
<svg class="a" style="left:1143px;top:150px" width="10" height="14" viewBox="0 0 10 14"><path d="M2,1 H8 M3,1 V6 M7,1 V6 M1,7 H9 L8,6 H2 Z" stroke="#222" stroke-width="1.2" fill="#222"/><rect x="3" y="1" width="4" height="6" fill="#333"/><path d="M5,7 V13" stroke="#222" stroke-width="1"/></svg>
<div class="t" style="left:1143px;top:549px;font-size:9.1px;font-weight:bold;color:#111;transform:rotate(-90deg);transform-origin:0 0">Properties</div>
<svg class="a" style="left:1142px;top:555px" width="14" height="12" viewBox="0 0 14 12"><rect x="0.5" y="0.5" width="3" height="3" fill="#d4b030"/><rect x="4.5" y="0.5" width="3" height="3" fill="#c03060"/><rect x="8.5" y="0.5" width="3" height="3" fill="#3aa845"/><path d="M0.5,6 H6" stroke="#555" stroke-width="0.6" stroke-dasharray="1,0.6"/><rect x="7" y="5.5" width="4" height="5.5" fill="#555"/></svg>
<div class="a" style="left:1158.5px;top:128px;width:16.5px;height:441px;background:#f4f4f4"></div>
<div class="a" style="left:1158.5px;top:129px;width:14.5px;height:37px;background:#ebebeb;border:1px solid #dedede"></div>
<div class="a" style="left:1158.5px;top:166px;width:14.5px;height:56px;background:#fff"></div>
<div class="a" style="left:1158.5px;top:222px;width:14.5px;height:100px;background:#ebebeb;border:1px solid #dedede"></div>
<div class="a" style="left:1158.5px;top:322px;width:14.5px;height:59px;background:#ebebeb;border:1px solid #dedede"></div>
<div class="a" style="left:1158.5px;top:381px;width:14.5px;height:82px;background:#ebebeb;border:1px solid #dedede"></div>
<div class="t" style="left:1160.5px;top:159px;font-size:8.62px;color:#333;transform:rotate(-90deg);transform-origin:0 0">Home</div>
<div class="t" style="left:1160.5px;top:214px;font-size:8.56px;color:#333;transform:rotate(-90deg);transform-origin:0 0">Properties</div>
<div class="t" style="left:1160.5px;top:315px;font-size:7.7px;color:#333;transform:rotate(-90deg);transform-origin:0 0">3D CONTENTCENTRAL</div>
<div class="t" style="left:1160.5px;top:373.8px;font-size:8.0px;color:#333;transform:rotate(-90deg);transform-origin:0 0">HomeByMe</div>
<div class="t" style="left:1160.5px;top:457px;font-size:8.4px;color:#333;transform:rotate(-90deg);transform-origin:0 0">G-code Generator</div>
<div class="a" style="left:2px;top:569px;width:1173px;height:3px;background:#6e6e6e"></div>
<div class="a" style="left:2px;top:572px;width:1173px;height:18px;background:#c2c2c2"></div>
<div class="t" style="left:5px;top:577.5px;font-size:8.56px;color:#111;font-weight:bold">Command Window</div>
<svg class="a" style="left:1143px;top:577px" width="9" height="9" viewBox="0 0 9 9"><rect x="3" y="0.7" width="5.3" height="5" fill="none" stroke="#111" stroke-width="1.1"/><rect x="0.7" y="3" width="5.3" height="5.3" fill="#c2c2c2" stroke="#111" stroke-width="1.1"/></svg>
<svg class="a" style="left:1160px;top:577px" width="9" height="9" viewBox="0 0 9 9"><path d="M1,1 L8,8 M8,1 L1,8" stroke="#111" stroke-width="1.6"/></svg>
<div class="a" style="left:2px;top:590px;width:1173px;height:64px;background:#fff;border-bottom:1px solid #c6c6c6;border-left:1px solid #bbb"></div>
<div class="t" style="left:6px;top:609px;font-size:11px;color:#222;">: ._MAINSELECTSpecify opposite corner:</div>
<div class="t" style="left:6px;top:622.5px;font-size:11px;color:#222;">: «Cancel»</div>
<div class="a" style="left:2px;top:655px;width:1173px;height:13px;background:#fff"></div>
<div class="t" style="left:6px;top:655px;font-size:9px;color:#333;">:</div>
<div class="a" style="left:2px;top:668px;width:1173px;height:21px;background:#f0f0f0"></div>
<div class="t" style="left:3.5px;top:675px;font-size:9.9px;color:#222;">DraftSight 2020 x64</div>
<div class="a" style="left:394px;top:671px;width:17px;height:16px;background:#cde4f7;border:1px solid #3f7fb5"></div>
<div class="a" style="left:417px;top:671px;width:17px;height:16px;background:#e4e4e4;border:1px solid #d0d0d0"></div>
<div class="a" style="left:439px;top:671px;width:17px;height:16px;background:#e4e4e4;border:1px solid #d0d0d0"></div>
<div class="a" style="left:461px;top:671px;width:17px;height:16px;background:#e4e4e4;border:1px solid #d0d0d0"></div>
<div class="a" style="left:484px;top:671px;width:17px;height:16px;background:#cde4f7;border:1px solid #3f7fb5"></div>
<div class="a" style="left:506px;top:671px;width:17px;height:16px;background:#cde4f7;border:1px solid #3f7fb5"></div>
<div class="a" style="left:528.5px;top:671px;width:17px;height:16px;background:#e4e4e4;border:1px solid #d0d0d0"></div>
<div class="a" style="left:550.5px;top:671px;width:17px;height:16px;background:#cde4f7;border:1px solid #3f7fb5"></div>
<div class="a" style="left:572.5px;top:671px;width:17px;height:16px;background:#cde4f7;border:1px solid #3f7fb5"></div>
<svg class="a" style="left:396px;top:672.5px" width="13" height="13" viewBox="0 0 13 13"><path d="M3,2 H8 L6.5,5 V8 H4.5 V5 Z" fill="#444"/><ellipse cx="9" cy="10" rx="3" ry="2" fill="#d4a017"/></svg>
<svg class="a" style="left:419px;top:672.5px" width="13" height="13" viewBox="0 0 13 13"><path d="M1,4 H12 M1,8 H12 M4,1 V12 M8,1 V12" stroke="#ccc" stroke-width="0.5"/><circle cx="3.5" cy="3.5" r="1.3" fill="#d02030"/><path d="M5,5 V12 L7,10 L8.5,13 L10,12.3 L8.6,9.5 L11,9.5 Z" fill="#fff" stroke="#333" stroke-width="0.7"/></svg>
<svg class="a" style="left:441px;top:672.5px" width="13" height="13" viewBox="0 0 13 13"><path d="M1.5,3 H11.5 M1.5,5.5 H11.5 M1.5,8 H11.5 M1.5,10.5 H11.5 M3,1.5 V12 M5.5,1.5 V12 M8,1.5 V12 M10.5,1.5 V12" stroke="#111" stroke-width="1"/></svg>
<svg class="a" style="left:463px;top:672.5px" width="13" height="13" viewBox="0 0 13 13"><path d="M3,3 L10,1.5 V11.5 L3,10 Z M0.5,6.5 H3 M10,6.5 H12.5" stroke="#333" fill="none" stroke-width="0.9"/></svg>
<svg class="a" style="left:486px;top:672.5px" width="13" height="13" viewBox="0 0 13 13"><circle cx="5.5" cy="7.5" r="3.8" fill="none" stroke="#333" stroke-width="0.9"/><path d="M5.5,7.5 L11,2 M9,10 L12,12" stroke="#3a9ad9" stroke-width="0.7" stroke-dasharray="1,0.7"/></svg>
<svg class="a" style="left:508px;top:672.5px" width="13" height="13" viewBox="0 0 13 13"><text x="1" y="6" font-size="5.5" font-family="Liberation Sans" fill="#1e6fc8">E</text><path d="M5,3 V11 L7,9 L8.5,12 L10,11.3 L8.6,8.5 L11,8.5 Z" fill="#fff" stroke="#333" stroke-width="0.7"/><rect x="10" y="10" width="2.5" height="2.5" fill="#d02030"/><path d="M1,12 H7" stroke="#333" stroke-width="0.6" stroke-dasharray="1,0.6"/></svg>
<svg class="a" style="left:530.5px;top:672.5px" width="13" height="13" viewBox="0 0 13 13"><text x="1" y="6" font-size="5.5" font-family="Liberation Sans" fill="#1e6fc8">E</text><path d="M5,4 H10 M4,6.5 H11 M3,9 H12 M2,11.5 H12" stroke="#333" stroke-width="0.8"/></svg>
<svg class="a" style="left:552.5px;top:672.5px" width="13" height="13" viewBox="0 0 13 13"><path d="M2,2 H6 C9,2 11,5 11,8 V11 H2 Z" fill="none" stroke="#333" stroke-width="0.8" stroke-dasharray="1.2,0.8"/><path d="M5,3.5 L9.5,9.5" stroke="#555" stroke-width="0.7"/></svg>
<svg class="a" style="left:574.5px;top:672.5px" width="13" height="13" viewBox="0 0 13 13"><rect x="5" y="5" width="6" height="6.5" fill="none" stroke="#333" stroke-width="0.9"/><path d="M8,1 V4 M6.5,2.5 H9.5" stroke="#1e6fc8" stroke-width="0.8"/><rect x="1" y="8" width="2.3" height="2.3" fill="#1e6fc8"/></svg>
<div class="a" style="left:596px;top:671px;width:66px;height:16px;background:#cde4f7;border:1px solid #3f7fb5"></div>
<div class="t" style="left:600px;top:674px;font-size:10.4px;color:#222;transform:scaleX(0.893);transform-origin:0 0">Dynamic CCS</div>
<div class="a" style="left:668.5px;top:671px;width:76.5px;height:16px;background:#e6e6e6;border:1px solid #cfcfcf"></div>
<div class="t" style="left:672.5px;top:675px;font-size:10.2px;color:#222;">Annotation</div>
<svg class="a" style="left:732px;top:675px" width="10" height="7" viewBox="0 0 10 7"><polygon points="0,0.5 10,0.5 5,6.5" fill="#111"/></svg>
<div class="t" style="left:750.5px;top:675px;font-size:9.1px;color:#222;">(1:1)</div>
<div class="t" style="left:775px;top:675px;font-size:9.3px;color:#222;">(10.9389,5.8189,0.0000)</div>
<div class="a" style="left:0;top:689px;width:1180px;height:31px;background:#2e3236"></div>
<svg class="a" style="left:13px;top:698.5px" width="15" height="15" viewBox="0 0 15 15"><path d="M0,2 L6.6,1.1 V7 H0 Z M7.4,1 L14.5,0 V7 H7.4 Z M0,7.8 H6.6 V13.8 L0,12.9 Z M7.4,7.8 H14.5 V14.8 L7.4,13.9 Z" fill="#fff"/></svg>
<div class="a" style="left:40px;top:689px;width:288px;height:31px;background:#f1f1f1"></div>
<svg class="a" style="left:49px;top:697px" width="16" height="17" viewBox="0 0 16 17"><circle cx="10" cy="6.5" r="4.6" fill="none" stroke="#222" stroke-width="1.4"/><path d="M6.6,9.8 L1.2,15.8" stroke="#222" stroke-width="1.6"/></svg>
<div class="t" style="left:73.5px;top:700.5px;font-size:12.3px;color:#333;">Type here to search</div>
<svg class="a" style="left:340px;top:699px" width="15" height="15" viewBox="0 0 15 15"><circle cx="7.5" cy="7.5" r="5.6" fill="none" stroke="#fff" stroke-width="1.6"/></svg>
<svg class="a" style="left:379px;top:697px" width="18" height="16" viewBox="0 0 18 16"><rect x="1.5" y="4" width="9.5" height="8" fill="none" stroke="#fff" stroke-width="1.3"/><path d="M1,1.5 H11.5 M1,14.5 H11.5 M14,2 V14 M16.5,2 V6 M16.5,8 V14" stroke="#fff" stroke-width="1.3"/></svg>
<div class="a" style="left:535.5px;top:689px;width:40.5px;height:31px;background:#4b4f53"></div>
<svg class="a" style="left:421px;top:696px" width="19" height="18" viewBox="0 0 19 18"><rect x="6" y="1" width="12" height="16" fill="#1f6bc1"/><rect x="11" y="1" width="7" height="8" fill="#41a5ee"/><rect x="6" y="9" width="12" height="8" fill="#1c5aa6"/><rect x="0.5" y="4" width="10" height="10" rx="1" fill="#0f5aa8"/><ellipse cx="5.5" cy="9" rx="2.5" ry="3" fill="none" stroke="#fff" stroke-width="1.3"/></svg>
<svg class="a" style="left:463px;top:697px" width="17" height="17" viewBox="0 0 17 17"><path d="M15.5,10 H4.5 C4.8,13 7,14.5 10,14.5 C12,14.5 13.8,13.8 15,13 V15.8 C13.5,16.5 11.5,17 9.5,17 C4,17 1,13.5 1,9 C1,4 4.5,0.5 9.5,0.5 C13.5,0.5 16,3.5 16,8 Z M12,7.5 C12,5.5 10.5,4 8.5,4 C6.5,4 5,5.5 4.6,7.5 Z" fill="#1b88e0"/></svg>
<svg class="a" style="left:504px;top:697px" width="19" height="16" viewBox="0 0 19 16"><path d="M0.5,2 H7 L9,4 H18.5 V15.5 H0.5 Z" fill="#e8b130"/><rect x="0.5" y="5.5" width="18" height="10" fill="#f8d16a"/><rect x="6" y="9" width="7" height="2.5" fill="#3a8bd8"/></svg>
<svg class="a" style="left:546px;top:696px" width="18" height="18" viewBox="0 0 18 18"><rect x="0" y="0" width="18" height="18" rx="1.5" fill="#ee5a2c"/><path d="M13,4 H5.5 V14 H13" stroke="#fff" stroke-width="2.3" fill="none"/></svg>
<svg class="a" style="left:588px;top:697px" width="18" height="18" viewBox="0 0 18 18"><circle cx="9" cy="9" r="8.5" fill="#db3a2e"/><path d="M9,9 L1.6,4.8 A8.5,8.5 0 0 0 9,17.5 Z" fill="#2ca04d"/><path d="M9,9 L9,17.5 A8.5,8.5 0 0 0 16.4,4.8 Z" fill="#f7c324"/><path d="M9,9 L16.4,4.8 A8.5,8.5 0 0 0 1.6,4.8 Z" fill="#db3a2e"/><circle cx="9" cy="9" r="4" fill="#fff"/><circle cx="9" cy="9" r="3.1" fill="#3a7ee6"/></svg>
<svg class="a" style="left:629px;top:696px" width="18" height="18" viewBox="0 0 18 18"><rect x="0" y="0" width="18" height="18" rx="1.5" fill="#2e86d6"/><path d="M13.5,4.5 H6 C4.5,4.5 4,6 4,7 C4,8 4.5,9 6,9 H12 C13.5,9 14,10 14,11 C14,12 13.5,13.5 12,13.5 H4.5" stroke="#fff" stroke-width="2.2" fill="none"/></svg>
<svg class="a" style="left:670px;top:696px" width="19" height="18" viewBox="0 0 19 18"><circle cx="10" cy="9" r="8.5" fill="#ed6c47"/><path d="M10,0.5 A8.5,8.5 0 0 1 18.5,9 H10 Z" fill="#ff8f6b"/><rect x="0.5" y="4" width="10" height="10" rx="1" fill="#c43e1c"/><path d="M4,12 V6 H6.3 C7.7,6 8.2,7 8.2,7.8 C8.2,8.7 7.6,9.6 6.3,9.6 H4" stroke="#fff" stroke-width="1.3" fill="none"/></svg>
<svg class="a" style="left:711px;top:696px" width="19" height="18" viewBox="0 0 19 18"><rect x="6" y="1" width="12.5" height="16" rx="1" fill="#41a5ee"/><rect x="6" y="6" width="12.5" height="5.5" fill="#2b7cd3"/><rect x="6" y="11.5" width="12.5" height="5.5" fill="#185abd"/><rect x="0.5" y="4" width="10" height="10" rx="1" fill="#185abd"/><path d="M2,6.5 L3.5,12 L5.5,7.5 L7.5,12 L9,6.5" stroke="#fff" stroke-width="1.1" fill="none"/></svg>
<svg class="a" style="left:753px;top:695px" width="19" height="20" viewBox="0 0 19 20"><rect x="0" y="0" width="19" height="20" fill="#f4f0ee"/><path d="M3,17 L9.5,3 L16,17 M5.5,12 H13.5" stroke="#c8102e" stroke-width="3" fill="none"/></svg>
<svg class="a" style="left:794px;top:696px" width="19" height="18" viewBox="0 0 19 18"><rect x="6" y="1" width="12.5" height="16" rx="1" fill="#21a366"/><rect x="12" y="1" width="6.5" height="8" fill="#33c481"/><rect x="6" y="9" width="12.5" height="8" fill="#107c41"/><rect x="0.5" y="4" width="10" height="10" rx="1" fill="#107c41"/><path d="M3,6.5 L8,11.5 M8,6.5 L3,11.5" stroke="#fff" stroke-width="1.3"/></svg>
<svg class="a" style="left:835px;top:697px" width="20" height="16" viewBox="0 0 20 16"><rect x="0.5" y="0.5" width="19" height="15" fill="#4aa3e8"/><rect x="2" y="2" width="16" height="12" fill="#bcdcf6"/><circle cx="6.5" cy="7" r="3" fill="#2a88d8"/><path d="M11,5 H17 M11,8 H17 M11,11 H17" stroke="#2a88d8" stroke-width="1"/></svg>
<svg class="a" style="left:876px;top:695px" width="20" height="20" viewBox="0 0 20 20"><polygon points="11,1 19,17 9,15" fill="#8fc3c9"/><path d="M1,4 C6,3 11,5 11,10 C11,15 7,17 4,16 Z" fill="#7cc34a"/><text x="5" y="19.5" font-size="5.5" font-family="Liberation Sans" font-weight="bold" fill="#eee">2020</text></svg>
<!-- REST END -->
<!-- webcam -->

<svg class="a" style="left:996px;top:587.5px" width="184" height="133" viewBox="996 587.5 184 133">
<defs>
 <filter id="bl" x="-5%" y="-5%" width="110%" height="110%"><feGaussianBlur stdDeviation="1.1"/></filter>
 <linearGradient id="hairg" x1="0" y1="0" x2="0" y2="1">
  <stop offset="0" stop-color="#a39480"/><stop offset="0.25" stop-color="#c2b29a"/><stop offset="0.6" stop-color="#d6c9b2"/><stop offset="1" stop-color="#d2c4ac"/>
 </linearGradient>
 <radialGradient id="faceg" cx="0.5" cy="0.45" r="0.6">
  <stop offset="0" stop-color="#e6cfc2"/><stop offset="1" stop-color="#d6b6a8"/>
 </radialGradient>
 <linearGradient id="wallg" x1="0" y1="0" x2="1" y2="0">
  <stop offset="0" stop-color="#948880"/><stop offset="1" stop-color="#9a8f86"/>
 </linearGradient>
</defs>
<g filter="url(#bl)">
 <rect x="996" y="587.5" width="184" height="133" fill="url(#wallg)"/>
 <!-- right door trim -->
 <rect x="1158" y="587.5" width="22" height="133" fill="#a99f96"/>
 <rect x="1164" y="587.5" width="8" height="133" fill="#bfb7ae"/>
 <!-- picture frame -->
 <rect x="1035" y="587.5" width="57" height="36" fill="#1e2134"/>
 <rect x="1045" y="587.5" width="39" height="30" fill="#d8d4d0"/>
 <circle cx="1062" cy="597" r="11.5" fill="#7a9a9a"/>
 <circle cx="1057" cy="594" r="5" fill="#c8b070"/>
 <circle cx="1067" cy="600" r="5" fill="#6a9a78"/>
 <circle cx="1066" cy="592" r="3.5" fill="#b86050"/>
 <circle cx="1058" cy="602" r="3.5" fill="#6a7ab0"/>
 <!-- mantel -->
 <rect x="996" y="621" width="174" height="27" fill="#3c2c26"/>
 <rect x="996" y="621" width="174" height="3" fill="#4d3a32"/>
 <!-- fireplace -->
 <rect x="996" y="648" width="162" height="72" fill="#3b3e46"/>
 <rect x="1132" y="650" width="26" height="45" fill="#56606c"/>
 <rect x="1008" y="652" width="36" height="50" fill="#30333a"/>
 <!-- leopard top -->
 <path d="M1004,706 C1024,690 1050,684 1074,682 L1110,682 C1132,684 1152,690 1168,706 L1176,720 L1000,720 Z" fill="#5e5048"/>
 <ellipse cx="1033.8" cy="697.3" rx="1.6" ry="1.3" fill="#3a302a"/><ellipse cx="1156.7" cy="703.0" rx="1.3" ry="1.6" fill="#3a302a"/><ellipse cx="1045.5" cy="701.1" rx="1.3" ry="0.9" fill="#2e2622"/><ellipse cx="1138.0" cy="688.5" rx="1.2" ry="1.6" fill="#9a8c80"/><ellipse cx="1043.2" cy="713.6" rx="1.6" ry="1.4" fill="#7a6a5c"/><ellipse cx="1149.7" cy="717.5" rx="1.9" ry="1.3" fill="#a89c90"/><ellipse cx="1128.8" cy="699.7" rx="1.2" ry="1.0" fill="#9a8c80"/><ellipse cx="1139.7" cy="708.1" rx="1.5" ry="1.5" fill="#7a6a5c"/><ellipse cx="1143.2" cy="701.0" rx="2.1" ry="1.3" fill="#2e2622"/><ellipse cx="1154.8" cy="719.7" rx="1.8" ry="1.1" fill="#2e2622"/><ellipse cx="1144.6" cy="691.3" rx="1.8" ry="1.6" fill="#2e2622"/><ellipse cx="1017.0" cy="701.4" rx="1.1" ry="1.4" fill="#a89c90"/><ellipse cx="1018.0" cy="694.6" rx="2.0" ry="0.8" fill="#a89c90"/><ellipse cx="1125.6" cy="711.0" rx="1.7" ry="1.5" fill="#7a6a5c"/><ellipse cx="1021.4" cy="685.3" rx="1.1" ry="1.3" fill="#9a8c80"/><ellipse cx="1019.9" cy="698.7" rx="1.3" ry="1.4" fill="#3a302a"/><ellipse cx="1136.2" cy="699.5" rx="2.1" ry="1.1" fill="#2e2622"/><ellipse cx="1032.8" cy="707.2" rx="1.8" ry="0.9" fill="#3a302a"/><ellipse cx="1153.2" cy="696.7" rx="2.1" ry="1.1" fill="#2e2622"/><ellipse cx="1024.1" cy="696.2" rx="2.2" ry="1.1" fill="#a89c90"/><ellipse cx="1035.6" cy="688.8" rx="1.6" ry="1.3" fill="#7a6a5c"/><ellipse cx="1040.3" cy="710.6" rx="1.7" ry="1.6" fill="#9a8c80"/><ellipse cx="1026.8" cy="706.6" rx="1.7" ry="1.1" fill="#7a6a5c"/><ellipse cx="1024.5" cy="697.3" rx="1.3" ry="1.4" fill="#3a302a"/><ellipse cx="1044.5" cy="719.0" rx="1.4" ry="1.0" fill="#2e2622"/><ellipse cx="1132.6" cy="694.0" rx="1.8" ry="0.9" fill="#a89c90"/><ellipse cx="1158.2" cy="709.6" rx="1.5" ry="1.5" fill="#2e2622"/><ellipse cx="1025.5" cy="707.4" rx="1.5" ry="1.0" fill="#3a302a"/><ellipse cx="1033.2" cy="690.9" rx="1.2" ry="1.0" fill="#3a302a"/><ellipse cx="1147.1" cy="713.8" rx="1.7" ry="1.1" fill="#7a6a5c"/><ellipse cx="1154.6" cy="702.9" rx="1.3" ry="1.3" fill="#a89c90"/><ellipse cx="1028.5" cy="691.2" rx="2.1" ry="1.5" fill="#a89c90"/><ellipse cx="1139.6" cy="718.4" rx="1.0" ry="1.2" fill="#2e2622"/><ellipse cx="1150.9" cy="718.8" rx="1.4" ry="1.0" fill="#3a302a"/><ellipse cx="1035.5" cy="694.3" rx="1.1" ry="1.5" fill="#2e2622"/><ellipse cx="1157.3" cy="716.7" rx="1.7" ry="0.8" fill="#a89c90"/><ellipse cx="1130.2" cy="697.6" rx="1.6" ry="1.1" fill="#9a8c80"/><ellipse cx="1146.0" cy="698.9" rx="2.2" ry="1.2" fill="#7a6a5c"/><ellipse cx="1126.2" cy="695.1" rx="1.6" ry="1.5" fill="#9a8c80"/><ellipse cx="1043.7" cy="717.2" rx="2.0" ry="0.8" fill="#2e2622"/><ellipse cx="1155.1" cy="689.6" rx="1.3" ry="1.3" fill="#7a6a5c"/><ellipse cx="1125.8" cy="698.3" rx="2.0" ry="1.4" fill="#9a8c80"/><ellipse cx="1014.0" cy="701.4" rx="2.0" ry="0.9" fill="#9a8c80"/><ellipse cx="1135.4" cy="698.1" rx="1.5" ry="1.1" fill="#7a6a5c"/><ellipse cx="1022.6" cy="719.6" rx="1.1" ry="1.2" fill="#a89c90"/><ellipse cx="1137.7" cy="690.6" rx="1.1" ry="1.2" fill="#2e2622"/><ellipse cx="1143.5" cy="708.4" rx="1.7" ry="1.1" fill="#9a8c80"/><ellipse cx="1031.8" cy="709.3" rx="2.1" ry="1.1" fill="#a89c90"/><ellipse cx="1020.7" cy="693.7" rx="1.1" ry="1.1" fill="#3a302a"/><ellipse cx="1047.2" cy="717.7" rx="2.2" ry="1.2" fill="#7a6a5c"/><ellipse cx="1128.4" cy="710.1" rx="2.0" ry="1.3" fill="#3a302a"/><ellipse cx="1144.3" cy="691.3" rx="1.9" ry="1.2" fill="#3a302a"/><ellipse cx="1027.5" cy="703.0" rx="1.1" ry="1.5" fill="#3a302a"/><ellipse cx="1012.9" cy="714.3" rx="1.0" ry="0.9" fill="#9a8c80"/><ellipse cx="1039.9" cy="694.2" rx="2.0" ry="0.8" fill="#7a6a5c"/><ellipse cx="1142.4" cy="710.9" rx="1.7" ry="0.9" fill="#9a8c80"/><ellipse cx="1143.8" cy="715.8" rx="2.0" ry="1.0" fill="#2e2622"/><ellipse cx="1022.0" cy="706.2" rx="1.3" ry="1.3" fill="#a89c90"/><ellipse cx="1144.0" cy="718.9" rx="1.6" ry="1.6" fill="#a89c90"/><ellipse cx="1041.9" cy="689.8" rx="1.9" ry="1.3" fill="#3a302a"/>
 <!-- hair back -->
 <path d="M1089,596 C1070,596 1061,610 1059,632 C1056,662 1050,696 1038,720 L1146,720 C1134,696 1127,662 1124,632 C1121,610 1108,596 1089,596 Z" fill="url(#hairg)"/>
 <!-- face -->
 <ellipse cx="1089.5" cy="651" rx="26" ry="32" fill="url(#faceg)"/>
 <!-- turtleneck -->
 <path d="M1073,676 H1107 L1110,720 H1070 Z" fill="#cfb89e"/>
 <!-- bangs -->
 <path d="M1062,636 C1060,610 1072,597 1089,597 C1106,597 1118,610 1117,636 C1104,629 1076,629 1062,636 Z" fill="#b9aa94"/>
 <path d="M1068,622 C1076,612 1102,612 1110,622 L1108,632 C1096,626 1082,626 1070,632 Z" fill="#d3c4ad"/>
 <!-- hair sides front -->
 <path d="M1063,628 C1062,660 1058,692 1042,720 L1070,720 C1072,700 1070,670 1068,645 Z" fill="#d9ccb4"/>
 <path d="M1116,628 C1118,660 1124,692 1142,720 L1110,720 C1108,700 1110,670 1112,645 Z" fill="#d9ccb4"/>
 <!-- eyes/mouth hints -->
 <ellipse cx="1078" cy="638" rx="4.5" ry="1.6" fill="#9c8078"/>
 <ellipse cx="1101" cy="638" rx="4.5" ry="1.6" fill="#9c8078"/>
 <ellipse cx="1092" cy="651" rx="3" ry="2" fill="#c49a8a"/>
 <ellipse cx="1091" cy="667" rx="7" ry="2.2" fill="#b48680"/>
 <!-- earrings -->
 <circle cx="1068.5" cy="668" r="3.6" fill="none" stroke="#d0bb80" stroke-width="1.5"/>
 <circle cx="1112" cy="668" r="3.6" fill="none" stroke="#d0bb80" stroke-width="1.5"/>
 <!-- left hand -->
 <path d="M996,684 C998,672 1004,664 1010,661 C1016,659 1021,662 1023,670 C1025,684 1025,700 1022,710 C1019,718 1012,720 1004,720 L996,720 Z" fill="#dcb6ac"/>
 <ellipse cx="1012" cy="666" rx="5" ry="3" fill="#e6c4ba"/>
 <circle cx="1020" cy="687" r="1.6" fill="#9a1a28"/><circle cx="1015.5" cy="694" r="1.6" fill="#9a1a28"/><circle cx="1017" cy="661" r="1.5" fill="#9a1a28"/>
 <!-- right hand -->
 <path d="M1180,686 C1177,674 1170,667 1163,667 C1157,670 1155,688 1157,704 C1159,714 1167,720 1176,720 L1180,720 Z" fill="#dcb6ac"/>
 <circle cx="1162" cy="669.5" r="1.5" fill="#9a1a28"/><circle cx="1169" cy="702" r="1.7" fill="#9a1a28"/>
</g>
</svg>
</body></html>
